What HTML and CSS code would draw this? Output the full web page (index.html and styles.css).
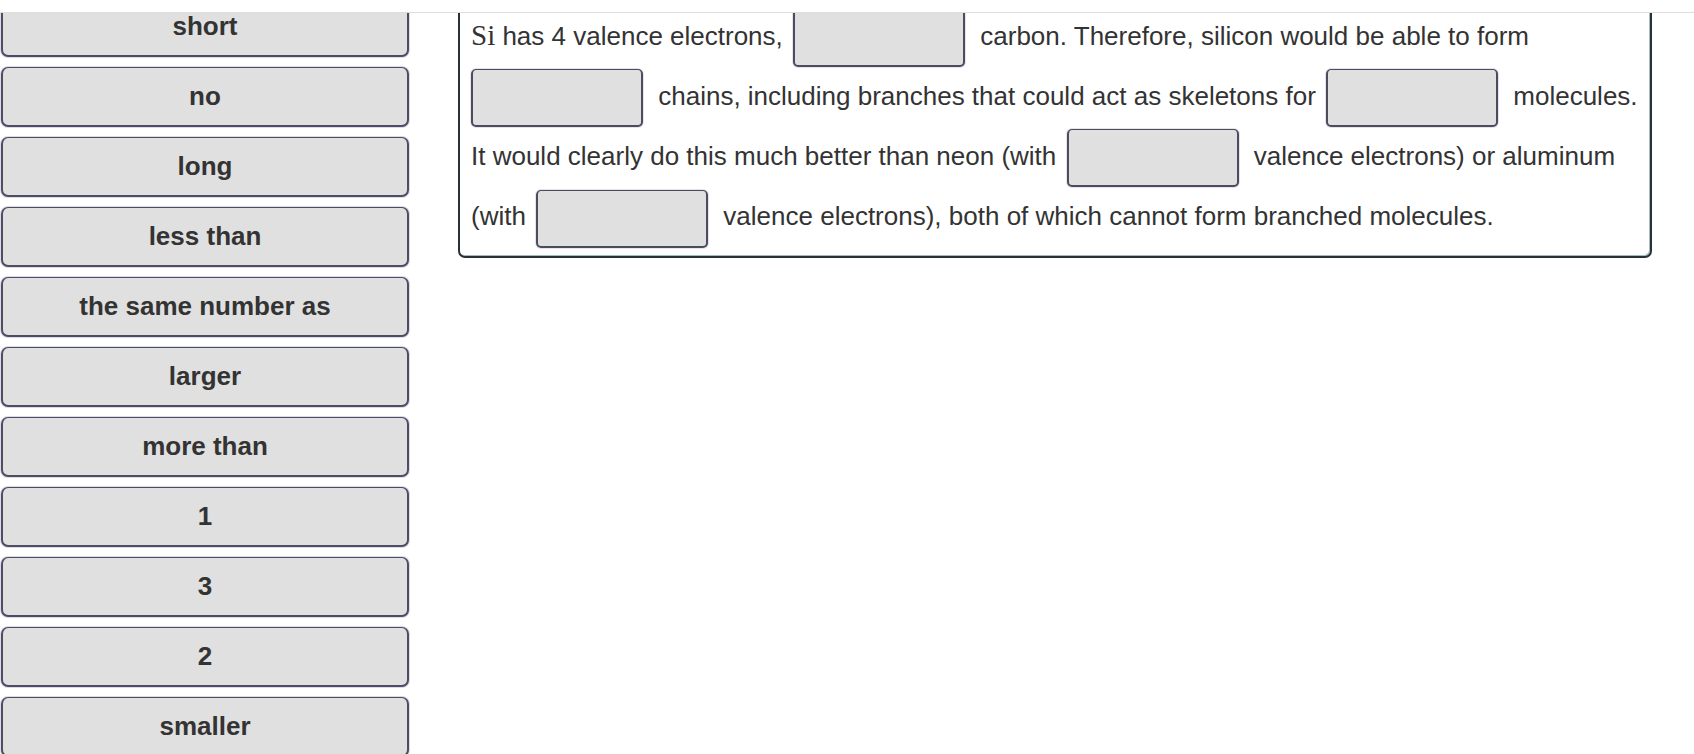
FILE: index.html
```html
<!DOCTYPE html>
<html lang="en">
<head>
<meta charset="utf-8">
<title>Drag and drop</title>
<link rel="stylesheet" href="styles.css">
</head>
<body>
<div class="topbar"></div>
<div class="stage">
  <div class="content">
    <div class="choices">
      <div class="choice">short</div>
      <div class="choice">no</div>
      <div class="choice">long</div>
      <div class="choice">less than</div>
      <div class="choice">the same number as</div>
      <div class="choice">larger</div>
      <div class="choice">more than</div>
      <div class="choice">1</div>
      <div class="choice">3</div>
      <div class="choice">2</div>
      <div class="choice">smaller</div>
    </div>
    <div class="question">
      <p class="passage"><span class="math">Si</span> has 4 valence electrons,<i class="pad"></i> <span class="blank"></span> carbon. Therefore, silicon would be able to form <span class="blank"></span> chains, including branches that could act as skeletons for<i class="pad"></i> <span class="blank"></span> molecules. It would clearly do this much better than neon (with<i class="pad"></i> <span class="blank"></span> valence electrons) or aluminum (with<i class="pad"></i> <span class="blank"></span> valence electrons), both of which cannot form branched molecules.</p>
    </div>
  </div>
</div>
</body>
</html>
```

FILE: styles.css
```css
html, body {
  margin: 0;
  padding: 0;
  background: #ffffff;
  height: 100%;
  overflow: hidden;
}

body {
  font-family: "Liberation Sans", Arial, Helvetica, sans-serif;
  color: #333333;
}

.topbar {
  height: 12px;
  border-bottom: 1px solid #dddddd;
  background: #ffffff;
}

.stage {
  height: calc(100vh - 13px);
  overflow: hidden;
}

.content {
  margin-top: -16px;
  display: flex;
  align-items: flex-start;
  gap: 49px;
  padding-left: 1px;
}

.choices {
  width: 408px;
  flex: none;
  display: flex;
  flex-direction: column;
  gap: 10px;
}

.choice {
  box-sizing: border-box;
  height: 60px;
  display: flex;
  align-items: center;
  justify-content: center;
  background: #e0e0e0;
  border: 2px solid #4e4e5e;
  border-top-width: 1.5px;
  border-radius: 7px;
  box-shadow: 0 0 0 1px rgba(185, 185, 225, 0.55);
  font-size: 26px;
  font-weight: bold;
  color: #333333;
}

.question {
  box-sizing: border-box;
  width: 1194px;
  flex: none;
  border: 2px solid #283134;
  border-radius: 7px;
  box-shadow: inset -1px -1px 0 #9fbcc2;
  padding: 7px 6px 8px 11px;
}

.passage {
  margin: 0;
  font-size: 26px;
  line-height: 59px;
  color: #333333;
}

.math {
  font-family: "Liberation Serif", "Times New Roman", serif;
  font-size: 29px;
}

.pad {
  display: inline-block;
  width: 3px;
}

.blank {
  display: inline-block;
  box-sizing: border-box;
  width: 172px;
  height: 58px;
  vertical-align: middle;
  margin: 0 8px 0 0;
  background: #e0e0e0;
  border: 2px solid #4c4c5a;
  border-top-width: 1.5px;
  border-radius: 5px;
  box-shadow: 0 0 0 1px rgba(185, 185, 225, 0.4);
}
```
